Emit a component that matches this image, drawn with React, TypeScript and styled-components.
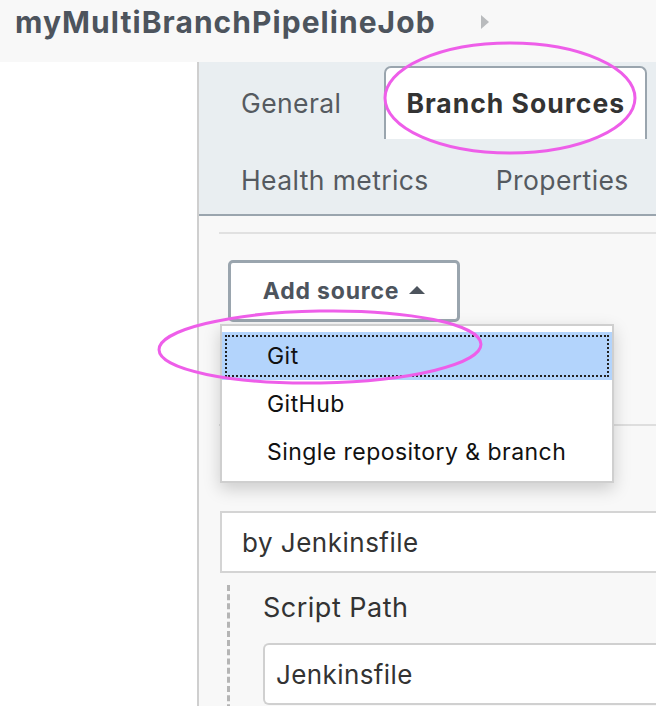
import React from "react";
import styled, { createGlobalStyle } from "styled-components";

const GlobalStyle = createGlobalStyle`
  html, body {
    margin: 0;
    padding: 0;
    background: #ffffff;
    overflow: hidden;
  }
  body {
    font-family: Inter, "Liberation Sans", Arial, sans-serif;
    -webkit-font-smoothing: antialiased;
  }
`;

const Page = styled.div`
  position: relative;
  width: 656px;
  height: 706px;
  overflow: hidden;
`;

const Header = styled.div`
  height: 62px;
  background: #f8f8f8;
  display: flex;
  align-items: center;
  padding-left: 15px;
  gap: 45px;
  box-sizing: border-box;
`;

const JobName = styled.div`
  font-size: 30px;
  font-weight: 700;
  color: #4d545d;
  letter-spacing: 1.05px;
  margin-top: -18px;
`;

const Chevron = styled.div`
  width: 0;
  height: 0;
  border-top: 7px solid transparent;
  border-bottom: 7px solid transparent;
  border-left: 8px solid #b9bbbd;
  margin-top: -18px;
`;

const Main = styled.div`
  display: flex;
  height: 644px;
`;

const Sidebar = styled.div`
  width: 197px;
  background: #ffffff;
  border-right: 2px solid #cfcfcf;
  flex-shrink: 0;
`;

const Panel = styled.div`
  flex: 1;
  background: #f8f8f8;
  min-width: 0;
  overflow: hidden;
`;

const TabBar = styled.div`
  height: 154px;
  box-sizing: border-box;
  background: #e9eef1;
  border-bottom: 2px solid #9aa5ae;
  padding: 4px 0 0 20px;
  display: flex;
  flex-direction: column;
  gap: 4px;
`;

const TabRow = styled.div<{ $gap: number }>`
  display: flex;
  gap: ${(p) => p.$gap}px;
`;

const Tab = styled.div<{ $active?: boolean }>`
  height: 73px;
  box-sizing: border-box;
  padding: 0 20px 1px;
  display: flex;
  align-items: center;
  font-size: 26.5px;
  white-space: nowrap;
  letter-spacing: ${(p) => (p.$active ? "1px" : "0.4px")};
  color: ${(p) => (p.$active ? "#333333" : "#555a60")};
  font-weight: ${(p) => (p.$active ? 700 : 400)};
  background: ${(p) => (p.$active ? "#ffffff" : "transparent")};
  border: 2px solid ${(p) => (p.$active ? "#9aa5ae" : "transparent")};
  border-bottom: none;
  border-radius: 7px 7px 0 0;
`;

/* section title scrolled up under the tab bar: only the bottom edge of its letters shows */
const ClippedHeading = styled.div`
  display: flow-root;
  height: 5px;
  overflow: hidden;
  padding-left: 64px;
  font-size: 25px;
  color: #b4b4b4;
  line-height: 25px;
  letter-spacing: 2px;

  span {
    display: block;
    margin-top: -21px;
  }
`;

const Rule = styled.div`
  margin: 11px 0 0 20px;
  height: 2px;
  background: #e1e1e1;
`;

const SourceBlock = styled.div`
  position: relative;
  padding: 26px 0 0 29px;
`;

const AddButton = styled.button`
  width: 232px;
  height: 62px;
  box-sizing: border-box;
  border: 3px solid #9aa5ae;
  border-radius: 5px;
  background: #ffffff;
  font-family: inherit;
  font-size: 23px;
  font-weight: 700;
  letter-spacing: 0.8px;
  color: #4d545d;
  display: flex;
  align-items: center;
  justify-content: center;
  gap: 10px;
  padding: 0;
`;

const CaretUp = styled.span`
  width: 0;
  height: 0;
  border-left: 8px solid transparent;
  border-right: 8px solid transparent;
  border-bottom: 8px solid #4d545d;
  margin-top: -3px;
`;

const Menu = styled.div`
  position: absolute;
  left: 21px;
  top: 90px;
  width: 394px;
  height: 159px;
  box-sizing: border-box;
  background: #ffffff;
  border: 2px solid #cfcfcf;
  box-shadow: 0 6px 16px rgba(0, 0, 0, 0.18);
  padding-top: 6px;
  z-index: 2;
`;

const MenuItem = styled.div<{ $selected?: boolean }>`
  height: 48px;
  box-sizing: border-box;
  display: flex;
  align-items: center;
  padding-left: 45px;
  font-size: 23px;
  letter-spacing: 0.45px;
  color: #111111;
  background: ${(p) => (p.$selected ? "#b3d4fc" : "transparent")};
  outline: ${(p) => (p.$selected ? "2px dotted #222" : "none")};
  outline-offset: -5px;
`;

const BehindLine = styled.div`
  margin: 102px 0 0 20px;
  height: 2px;
  background: #dedede;
`;

const SelectBox = styled.div`
  margin: 85px 0 0 21px;
  height: 62px;
  box-sizing: border-box;
  background: #ffffff;
  border: 2px solid #d4d4d4;
  border-right: none;
  display: flex;
  align-items: center;
  padding-left: 20px;
  font-size: 26px;
  letter-spacing: 0.5px;
  color: #333333;
`;

const Nested = styled.div`
  margin: 12px 0 0 28px;
  border-left: 3px dashed #b5b5b5;
  padding: 8px 0 0 33px;
  height: 200px;
`;

const FieldLabel = styled.div`
  font-size: 27px;
  letter-spacing: 0.5px;
  color: #333333;
  height: 30px;
  line-height: 30px;
`;

const TextInput = styled.div`
  margin-top: 20px;
  height: 62px;
  box-sizing: border-box;
  background: #ffffff;
  border: 2px solid #d0d0d0;
  border-right: none;
  border-radius: 6px 0 0 6px;
  display: flex;
  align-items: center;
  padding-left: 11px;
  font-size: 26px;
  letter-spacing: 0.4px;
  color: #333333;
`;

const Annotations = styled.svg`
  position: absolute;
  left: 0;
  top: 0;
  pointer-events: none;
  z-index: 5;
`;

export default function App() {
  return (
    <Page>
      <GlobalStyle />
      <Header>
        <JobName>myMultiBranchPipelineJob</JobName>
        <Chevron />
      </Header>
      <Main>
        <Sidebar />
        <Panel>
          <TabBar>
            <TabRow $gap={21}>
              <Tab>General</Tab>
              <Tab $active>Branch Sources</Tab>
            </TabRow>
            <TabRow $gap={23}>
              <Tab>Health metrics</Tab>
              <Tab>Properties</Tab>
            </TabRow>
          </TabBar>
          <ClippedHeading>
            <span>Branch Sources</span>
          </ClippedHeading>
          <Rule />
          <SourceBlock>
            <AddButton>
              Add source <CaretUp />
            </AddButton>
            <Menu>
              <MenuItem $selected>Git</MenuItem>
              <MenuItem>GitHub</MenuItem>
              <MenuItem>Single repository &amp; branch</MenuItem>
            </Menu>
          </SourceBlock>
          <BehindLine />
          <SelectBox>by Jenkinsfile</SelectBox>
          <Nested>
            <FieldLabel>Script Path</FieldLabel>
            <TextInput>Jenkinsfile</TextInput>
          </Nested>
        </Panel>
      </Main>
      <Annotations width="656" height="706" viewBox="0 0 656 706">
        <ellipse cx="510" cy="98" rx="125" ry="55" fill="none" stroke="#ee5ee9" strokeWidth="3" />
        <ellipse cx="320" cy="347" rx="161" ry="36" fill="none" stroke="#ee5ee9" strokeWidth="3" transform="rotate(-1 320 347)" />
      </Annotations>
    </Page>
  );
}
